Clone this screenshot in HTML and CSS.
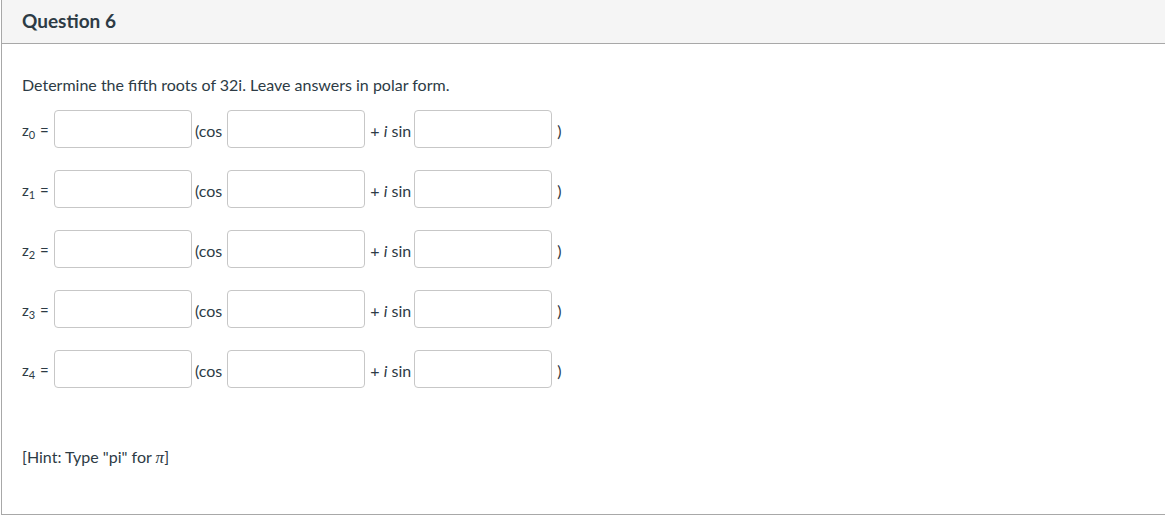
FILE: index.html
```html
<!DOCTYPE html>
<html>
<head>
<meta charset="utf-8">
<link rel="stylesheet" href="styles.css">
</head>
<body>
<div class="question">
  <div class="q-header">
    <h2 class="q-title">Question 6</h2>
  </div>
  <div class="q-body">
    <p class="q-text">Determine the fifth roots of 32i. Leave answers in polar form.</p>
    <div class="rows">
      <div class="row">
        <span class="lbl">z<sub>0</sub> =</span>
        <input class="box" type="text">
        <span class="word cos">(cos</span>
        <input class="box" type="text">
        <span class="word plus">+ <em>i</em> sin</span>
        <input class="box" type="text">
        <span class="word close">)</span>
      </div>
      <div class="row">
        <span class="lbl">z<sub>1</sub> =</span>
        <input class="box" type="text">
        <span class="word cos">(cos</span>
        <input class="box" type="text">
        <span class="word plus">+ <em>i</em> sin</span>
        <input class="box" type="text">
        <span class="word close">)</span>
      </div>
      <div class="row">
        <span class="lbl">z<sub>2</sub> =</span>
        <input class="box" type="text">
        <span class="word cos">(cos</span>
        <input class="box" type="text">
        <span class="word plus">+ <em>i</em> sin</span>
        <input class="box" type="text">
        <span class="word close">)</span>
      </div>
      <div class="row">
        <span class="lbl">z<sub>3</sub> =</span>
        <input class="box" type="text">
        <span class="word cos">(cos</span>
        <input class="box" type="text">
        <span class="word plus">+ <em>i</em> sin</span>
        <input class="box" type="text">
        <span class="word close">)</span>
      </div>
      <div class="row">
        <span class="lbl">z<sub>4</sub> =</span>
        <input class="box" type="text">
        <span class="word cos">(cos</span>
        <input class="box" type="text">
        <span class="word plus">+ <em>i</em> sin</span>
        <input class="box" type="text">
        <span class="word close">)</span>
      </div>
    </div>
    <p class="hint">[Hint: Type "pi" for <span class="pi">π</span>]</p>
  </div>
</div>
</body>
</html>
```
FILE: styles.css
```css
html, body {
  margin: 0;
  padding: 0;
  overflow: hidden;
  background: #fff;
}
body {
  font-family: Lato, "Liberation Sans", sans-serif;
  color: #2d3b45;
}
.question {
  margin-left: 1px;
  width: 1200px;
  border-left: 1px solid #a8a8a8;
  border-bottom: 1px solid #a8a8a8;
}
.q-header {
  height: 43px;
  background: #f5f5f5;
  border-bottom: 1px solid #a8a8a8;
  display: flex;
  align-items: center;
  padding-left: 20px;
}
.q-title {
  margin: 0;
  font-size: 19px;
  font-weight: 700;
  line-height: 24px;
  padding-bottom: 2px;
}
.q-body {
  padding: 29px 20px 44px 20px;
}
.q-text {
  margin: 0 0 13px 0;
  font-size: 16px;
  line-height: 24px;
}
.rows {
  display: flex;
  flex-direction: column;
  gap: 22px;
}
.row {
  display: flex;
  align-items: center;
  height: 38px;
  font-size: 16px;
}
.lbl {
  font-size: 15px;
  width: 32px;
  padding-top: 4px;
  white-space: nowrap;
}
.lbl sub {
  font-size: 11px;
  vertical-align: -3px;
  margin-right: 1px;
}
.box {
  box-sizing: border-box;
  width: 138px;
  height: 38px;
  margin: 0;
  padding: 0 6px;
  border: 1px solid #c7c7c7;
  border-radius: 4px;
  background: #fff;
  font: inherit;
}
.word {
  white-space: nowrap;
  padding-top: 3px;
}
.cos {
  padding-left: 3px;
  padding-right: 5px;
}
.plus {
  padding-left: 5px;
  padding-right: 3px;
}
.plus em {
  font-style: italic;
}
.close {
  padding-left: 5px;
}
.hint {
  margin: 57px 0 0 0;
  font-size: 16px;
  line-height: 24px;
}
.pi {
  font-family: "Liberation Serif", serif;
  font-style: italic;
  font-size: 17px;
}
```
